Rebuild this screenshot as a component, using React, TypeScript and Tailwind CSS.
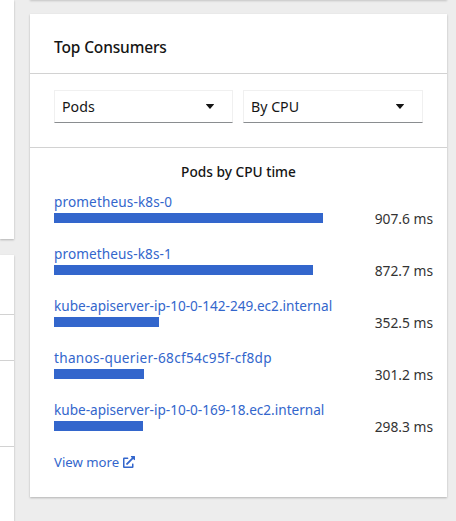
import { FaExternalLinkAlt } from "react-icons/fa";

const rows = [
  { name: "prometheus-k8s-0", value: "907.6 ms", width: "w-[269px]", track: "tracking-[0.12px]" },
  { name: "prometheus-k8s-1", value: "872.7 ms", width: "w-[259px]", track: "tracking-[0.1px]" },
  { name: "kube-apiserver-ip-10-0-142-249.ec2.internal", value: "352.5 ms", width: "w-[105px]", track: "" },
  { name: "thanos-querier-68cf54c95f-cf8dp", value: "301.2 ms", width: "w-[90px]", track: "tracking-[0.29px]" },
  { name: "kube-apiserver-ip-10-0-169-18.ec2.internal", value: "298.3 ms", width: "w-[89px]", track: "" },
];

function Caret() {
  return (
    <svg width="8" height="5" viewBox="0 0 8 5" aria-hidden="true">
      <path d="M0.4 0h7.2c.4 0 .5.4.3.6L4.3 4.7a.4.4 0 0 1-.6 0L.1.6C-.1.4 0 0 .4 0z" fill="#151515" />
    </svg>
  );
}

function SelectBox({ label, className }: { label: string; className: string }) {
  return (
    <div className={`flex h-[33px] items-center justify-between border border-[#f0f0f0] border-b-[#8a8d90] bg-white pl-[7px] pr-[18px] text-[14.2px] text-[#151515] ${className}`}>
      <span>{label}</span>
      <Caret />
    </div>
  );
}

export default function App() {
  return (
    <div className="relative flex h-[521px] w-[456px] overflow-hidden bg-[#ededed] font-['Noto_Sans',sans-serif]">
      <div className="absolute left-[30px] top-[-10px] h-[10px] w-[417px] bg-white shadow-[0_1px_2px_rgba(0,0,0,0.18)]" />
      <div className="flex w-[14px] shrink-0 flex-col">
        <div className="h-[239px] bg-white shadow-[0_1px_2px_rgba(0,0,0,0.25)]" />
        <div className="mt-4 flex flex-1 flex-col bg-white shadow-[0_1px_2px_rgba(0,0,0,0.25)]">
          <div className="h-[60px] border-b border-[#d2d2d2]" />
          <div className="h-[46px] border-b border-[#d2d2d2]" />
          <div className="h-[86px] border-b border-[#d2d2d2]" />
        </div>
      </div>
      <div className="ml-4 mt-[14px] flex h-[483px] w-[417px] flex-col bg-white shadow-[0_1px_2px_rgba(0,0,0,0.25)]">
        <div className="flex h-[60px] items-center border-b border-[#d2d2d2] pl-6 pt-[8px] text-[15.5px] font-medium tracking-[-0.15px] text-[#151515]">
          Top Consumers
        </div>
        <div className="flex h-[74px] gap-[10px] border-b border-[#d2d2d2] pl-6 pt-4">
          <SelectBox label="Pods" className="w-[179px]" />
          <SelectBox label="By CPU" className="w-[180px]" />
        </div>
        <div className="flex flex-1 flex-col">
          <div className="mt-[14px] text-center text-[13.7px] leading-[20px] font-medium text-[#151515]">Pods by CPU time</div>
          <div className="mt-[10px] flex flex-col gap-[21px] pl-6 pr-[14px]">
            {rows.map((row) => (
              <div key={row.name} className="grid grid-cols-[1fr_auto]">
                <div className={`col-span-2 text-[13.6px] leading-[20px] text-[#3366cc] ${row.track}`}>{row.name}</div>
                <div className={`mt-[1px] h-[10px] bg-[#3366cc] ${row.width}`} />
                <div className="mt-[2px] h-[9px] text-[13.8px] leading-[10px] text-[#333]">{row.value}</div>
              </div>
            ))}
          </div>
          <div className="mt-[21px] flex items-center gap-1 pl-6 text-[13.2px] leading-[20px] text-[#3366cc]">
            View more <FaExternalLinkAlt className="h-3 w-3" />
          </div>
        </div>
      </div>
    </div>
  );
}
